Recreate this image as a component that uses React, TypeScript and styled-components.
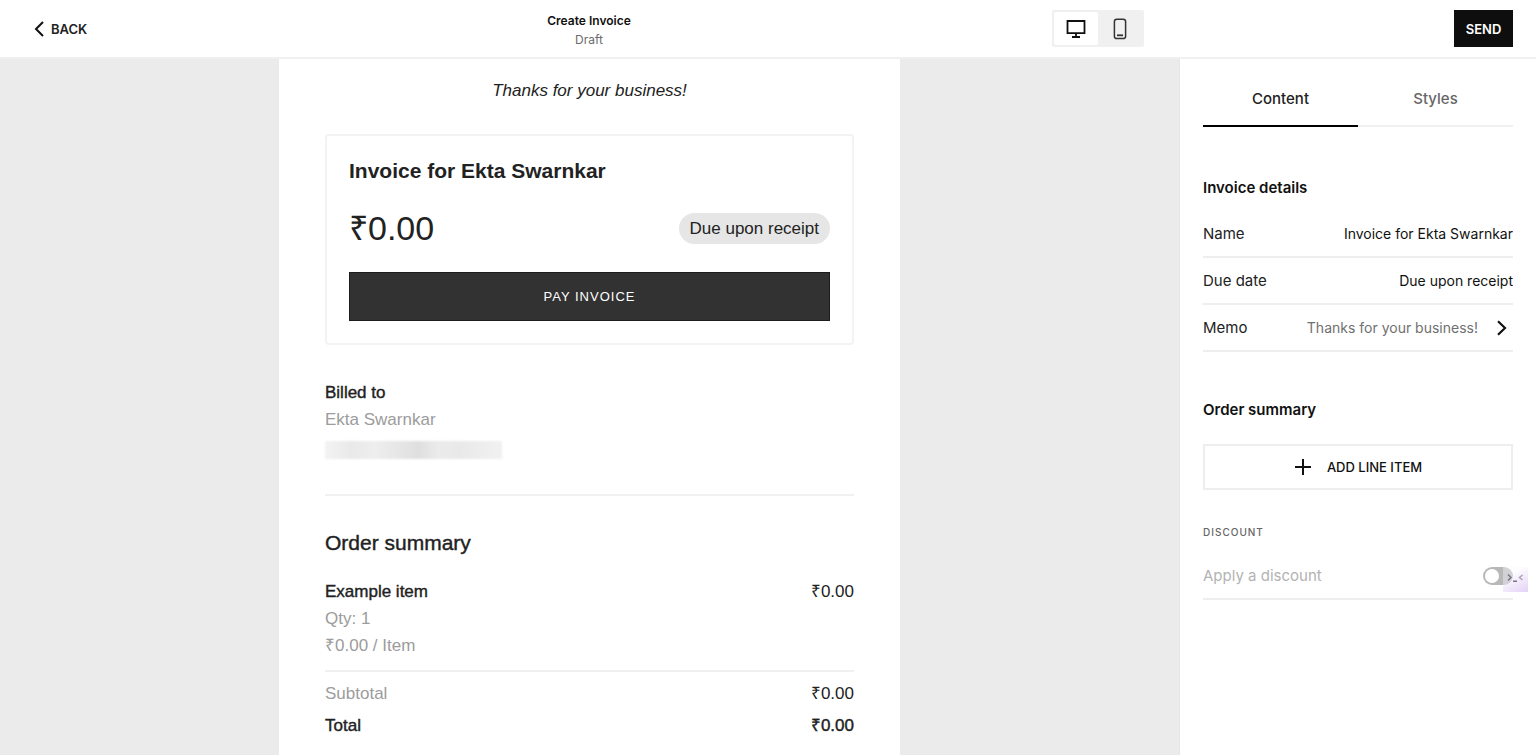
import React, { useState } from "react";
import styled, { createGlobalStyle } from "styled-components";

const GlobalStyle = createGlobalStyle`
  *, *::before, *::after { box-sizing: border-box; }
  body {
    margin: 0;
    background: #ebebeb;
    color: #111;
    font-family: Inter, "Liberation Sans", sans-serif;
    font-size: 14px;
  }
  button, input, select { font: inherit; color: inherit; }
  h1, h2, h3, p { margin: 0; }
`;

const PlainButton = styled.button`
  display: inline-flex;
  align-items: center;
  justify-content: center;
  padding: 0;
  border: 0;
  background: none;
  cursor: pointer;
`;

const Page = styled.div`
  display: flex;
  flex-direction: column;
  min-height: 100vh;
`;

const Header = styled.header`
  display: grid;
  grid-template-columns: minmax(0, 1fr) 357px;
  background: #fff;
  border-bottom: 2px solid #f0f0f0;
`;

const HeaderMain = styled.div`
  display: grid;
  grid-template-columns: 1fr auto 1fr;
  align-items: center;
  height: 57px;
  padding: 0 35px 0 34px;
`;

const HeaderSide = styled.div`
  display: flex;
  align-items: center;
  justify-content: flex-end;
  padding: 0 23px;
`;

const BackButton = styled(PlainButton)`
  justify-self: start;
  gap: 7px;
  font-size: 13px;
  font-weight: 600;
  color: #222;
`;

const TitleBlock = styled.div`
  padding-top: 2px;
  text-align: center;
`;

const PageTitle = styled.h1`
  font-size: 12px;
  line-height: 20px;
  font-weight: 600;
`;

const Status = styled.p`
  font-size: 12px;
  line-height: 18px;
  color: #6b6b6b;
`;

const DeviceSwitch = styled.div`
  justify-self: end;
  display: flex;
  padding: 2px;
  border-radius: 2px;
  background: #f0f0f0;
`;

const DeviceButton = styled(PlainButton)<{ $active: boolean }>`
  width: 44px;
  height: 33px;
  border-radius: 2px;
  background: ${(p) => (p.$active ? "#fff" : "transparent")};
`;

const SendButton = styled(PlainButton)`
  width: 59px;
  height: 37px;
  background: #0e0e0e;
  color: #fff;
  font-size: 13px;
  font-weight: 600;
`;

const Body = styled.div`
  flex: 1;
  display: grid;
  grid-template-columns: minmax(0, 1fr) 357px;
`;

const Preview = styled.main`
  display: flex;
  justify-content: center;
  font-family: "Liberation Sans", Arial, sans-serif;
  font-size: 17px;
  line-height: 27px;
  color: #222;
`;

const Paper = styled.article`
  width: 100%;
  max-width: 621px;
  padding: 18px 46px 14px;
  background: #fff;
`;

const MemoText = styled.p`
  text-align: center;
  font-style: italic;
`;

const Card = styled.section`
  margin-top: 30px;
  padding: 22px;
  border: 2px solid #f3f3f3;
  border-radius: 4px;
`;

const CardTitle = styled.h2`
  font-size: 21px;
  line-height: 26px;
`;

const AmountRow = styled.div`
  display: flex;
  align-items: center;
  justify-content: space-between;
  margin: 24px 0;
`;

const Amount = styled.span`
  font-size: 34px;
  line-height: 40px;
`;

const DuePill = styled.span`
  padding: 2px 11px;
  border-radius: 16px;
  background: #e6e6e6;
`;

const PayButton = styled(PlainButton)`
  display: flex;
  width: 100%;
  height: 49px;
  border: 1px solid #1c1c1c;
  background: #323232;
  color: #fff;
  font-size: 13px;
  letter-spacing: 1px;
`;

const BilledTo = styled.section`
  margin-top: 34px;
  padding-bottom: 35px;
  border-bottom: 2px solid #f1f1f1;
`;

const Strong = styled.h3`
  font-size: 17px;
  line-height: 27px;
  font-weight: 500;
  color: #222;
  -webkit-text-stroke: 0.4px #222;
`;

const Muted = styled.p`
  color: #9c9c9c;
`;

const HiddenEmail = styled.div`
  width: 177px;
  height: 18px;
  margin-top: 8px;
  background: linear-gradient(90deg, #f3f3f3, #e9e9e9 15%, #eeeeee 28%, #e7e7e7 40%, #dfdfdf 53%, #ebebeb 64%, #e9e9e9 76%, #f1f1f1);
  filter: blur(1px);
`;

const OrderTitle = styled.h2`
  margin: 33px 0 21px;
  font-size: 21px;
  line-height: 28px;
  font-weight: 500;
  -webkit-text-stroke: 0.4px #222;
`;

const OrderTable = styled.table`
  width: 100%;
  border-collapse: collapse;

  th, td { padding: 0; text-align: left; vertical-align: top; font-weight: 400; }
  td { text-align: right; }
`;

const ItemRow = styled.tr`
  border-bottom: 2px solid #f0f0f0;
  th { padding-bottom: 11px; }
`;

const TotalRow = styled.tr<{ $muted?: boolean; $first?: boolean }>`
  line-height: 32px;
  th, td { padding-top: ${(p) => (p.$first ? "6px" : "0")}; }
  th { color: ${(p) => (p.$muted ? "#9c9c9c" : "#222")}; }
  -webkit-text-stroke: ${(p) => (p.$muted ? "0" : "0.4px #222")};
`;

const Panel = styled.aside`
  padding: 0 23px;
  border-left: 1px solid #e6e6e6;
  background: #fff;
`;

const Tabs = styled.div`
  display: grid;
  grid-template-columns: 1fr 1fr;
  box-shadow: inset 0 -2px #f0f0f0;
`;

const Tab = styled(PlainButton)<{ $active: boolean }>`
  height: 68px;
  padding-top: 12px;
  border-bottom: 2px solid ${(p) => (p.$active ? "#000" : "transparent")};
  font-size: 15px;
  font-weight: 500;
  color: ${(p) => (p.$active ? "#222" : "#666")};
`;

const PanelSection = styled.section<{ $top: number }>`
  padding-top: ${(p) => p.$top}px;
`;

const PanelTitle = styled.h2`
  font-size: 15px;
  line-height: 20px;
  font-weight: 600;
`;

const Fields = styled.div`
  margin-top: 13px;
`;

const Field = styled.div<{ $muted?: boolean }>`
  position: relative;
  display: flex;
  align-items: center;
  justify-content: space-between;
  height: 47px;
  border-bottom: 2px solid #eeeeee;
  color: ${(p) => (p.$muted ? "#b3b3b3" : "#222")};

  label { font-size: 15px; }
`;

const FieldInput = styled.input`
  flex: 1;
  min-width: 0;
  padding: 0;
  border: 0;
  background: none;
  text-align: right;
  color: #111;
`;

const FieldSelect = styled.select`
  appearance: none;
  padding: 0;
  border: 0;
  background: none;
  text-align-last: right;
  color: #111;
`;

const MemoButton = styled(PlainButton)`
  gap: 18px;
  padding-right: 6px;
  color: #707070;
`;

const AddButton = styled(PlainButton)`
  display: flex;
  gap: 15px;
  width: 100%;
  height: 46px;
  margin-top: 24px;
  border: 2px solid #eeeeee;
  font-size: 13px;
  font-weight: 500;
`;

const Eyebrow = styled.h3`
  font-size: 10px;
  line-height: 16px;
  font-weight: 500;
  letter-spacing: 1px;
  color: #666;
`;

const Toggle = styled.input`
  appearance: none;
  width: 30px;
  height: 18px;
  margin: 0;
  padding: 2px;
  border-radius: 9px;
  background: #b8b8b8;

  &::before {
    content: "";
    display: block;
    width: 14px;
    height: 14px;
    border-radius: 50%;
    background: #fff;
  }
  &:checked { background: #111; }
  &:checked::before { margin-left: auto; }
`;

const Assistant = styled(PlainButton)`
  position: absolute;
  right: -15px;
  bottom: 6px;
  width: 25px;
  height: 25px;
  padding-bottom: 4px;
  background: linear-gradient(150deg, rgba(250, 248, 254, 0.4) 30%, rgba(225, 205, 245, 0.9));
`;

export default function App() {
  const [device, setDevice] = useState("desktop");
  const [tab, setTab] = useState("Content");
  const [name, setName] = useState("Invoice for Ekta Swarnkar");

  return (
    <Page>
      <GlobalStyle />
      <Header>
        <HeaderMain>
          <BackButton type="button">
            <svg width="10" height="16" viewBox="0 0 10 16" fill="none" stroke="#111" strokeWidth="2">
              <path d="M9 1 2 8l7 7" />
            </svg>
            BACK
          </BackButton>
          <TitleBlock>
            <PageTitle>Create Invoice</PageTitle>
            <Status>Draft</Status>
          </TitleBlock>
          <DeviceSwitch>
            <DeviceButton type="button" aria-label="Desktop preview" $active={device === "desktop"} onClick={() => setDevice("desktop")}>
              <svg width="20" height="20" viewBox="0 0 20 20" fill="none" stroke="#111">
                <path d="M1.5 2h17v12.2h-17z" strokeWidth="1.8" />
                <path d="M10 14v4M6 18h8" strokeWidth="1.8" />
              </svg>
            </DeviceButton>
            <DeviceButton type="button" aria-label="Mobile preview" $active={device === "mobile"} onClick={() => setDevice("mobile")}>
              <svg width="14" height="22" viewBox="0 0 14 22" fill="none" stroke="#333" strokeWidth="1.5">
                <rect x="1.4" y="1.2" width="11.2" height="19.4" rx="2.4" />
                <path d="M4 17.3h6" strokeWidth="1.8" />
              </svg>
            </DeviceButton>
          </DeviceSwitch>
        </HeaderMain>
        <HeaderSide>
          <SendButton type="button">SEND</SendButton>
        </HeaderSide>
      </Header>

      <Body>
        <Preview>
          <Paper>
            <MemoText>Thanks for your business!</MemoText>
            <Card>
              <CardTitle>Invoice for Ekta Swarnkar</CardTitle>
              <AmountRow>
                <Amount>₹0.00</Amount>
                <DuePill>Due upon receipt</DuePill>
              </AmountRow>
              <PayButton type="button">PAY INVOICE</PayButton>
            </Card>
            <BilledTo>
              <Strong>Billed to</Strong>
              <Muted>Ekta Swarnkar</Muted>
              <HiddenEmail />
            </BilledTo>
            <OrderTitle>Order summary</OrderTitle>
            <OrderTable>
              <tbody>
                <ItemRow>
                  <th scope="row">
                    <Strong>Example item</Strong>
                    <Muted>Qty: 1</Muted>
                    <Muted>₹0.00 / Item</Muted>
                  </th>
                  <td>₹0.00</td>
                </ItemRow>
                <TotalRow $muted $first>
                  <th scope="row">Subtotal</th>
                  <td>₹0.00</td>
                </TotalRow>
                <TotalRow>
                  <th scope="row">Total</th>
                  <td>₹0.00</td>
                </TotalRow>
              </tbody>
            </OrderTable>
          </Paper>
        </Preview>

        <Panel>
          <Tabs role="tablist">
            {["Content", "Styles"].map((label) => (
              <Tab key={label} type="button" role="tab" aria-selected={tab === label} $active={tab === label} onClick={() => setTab(label)}>
                {label}
              </Tab>
            ))}
          </Tabs>

          <PanelSection $top={51}>
            <PanelTitle>Invoice details</PanelTitle>
            <Fields>
              <Field>
                <label htmlFor="invoice-name">Name</label>
                <FieldInput id="invoice-name" value={name} onChange={(e) => setName(e.target.value)} />
              </Field>
              <Field>
                <label htmlFor="due-date">Due date</label>
                <FieldSelect id="due-date">
                  <option>Due upon receipt</option>
                </FieldSelect>
              </Field>
              <Field>
                <label htmlFor="memo">Memo</label>
                <MemoButton id="memo" type="button">
                  Thanks for your business!
                  <svg width="11" height="16" viewBox="0 0 11 16" fill="none" stroke="#111" strokeWidth="2.2">
                    <path d="M2 1.2 9 8l-7 6.8" />
                  </svg>
                </MemoButton>
              </Field>
            </Fields>
          </PanelSection>

          <PanelSection $top={48}>
            <PanelTitle>Order summary</PanelTitle>
            <AddButton type="button">
              <svg width="18" height="18" viewBox="0 0 18 18" fill="none" stroke="#111" strokeWidth="2">
                <path d="M9 1v16M1 9h16" />
              </svg>
              ADD LINE ITEM
            </AddButton>
          </PanelSection>

          <PanelSection $top={34}>
            <Eyebrow>DISCOUNT</Eyebrow>
            <Fields>
              <Field $muted>
                <label htmlFor="discount">Apply a discount</label>
                <Toggle id="discount" type="checkbox" />
                <Assistant type="button" aria-label="Assistant">
                  <svg width="17" height="10" viewBox="0 0 17 10" fill="none" stroke="#77738a" strokeWidth="1.5">
                    <path d="M1 1.5 4 4.5 1 7.5M6 8.3h4" />
                    <path d="m15.5 2-3 2.5 3 2.5" stroke="#a7a3b5" />
                  </svg>
                </Assistant>
              </Field>
            </Fields>
          </PanelSection>
        </Panel>
      </Body>
    </Page>
  );
}
